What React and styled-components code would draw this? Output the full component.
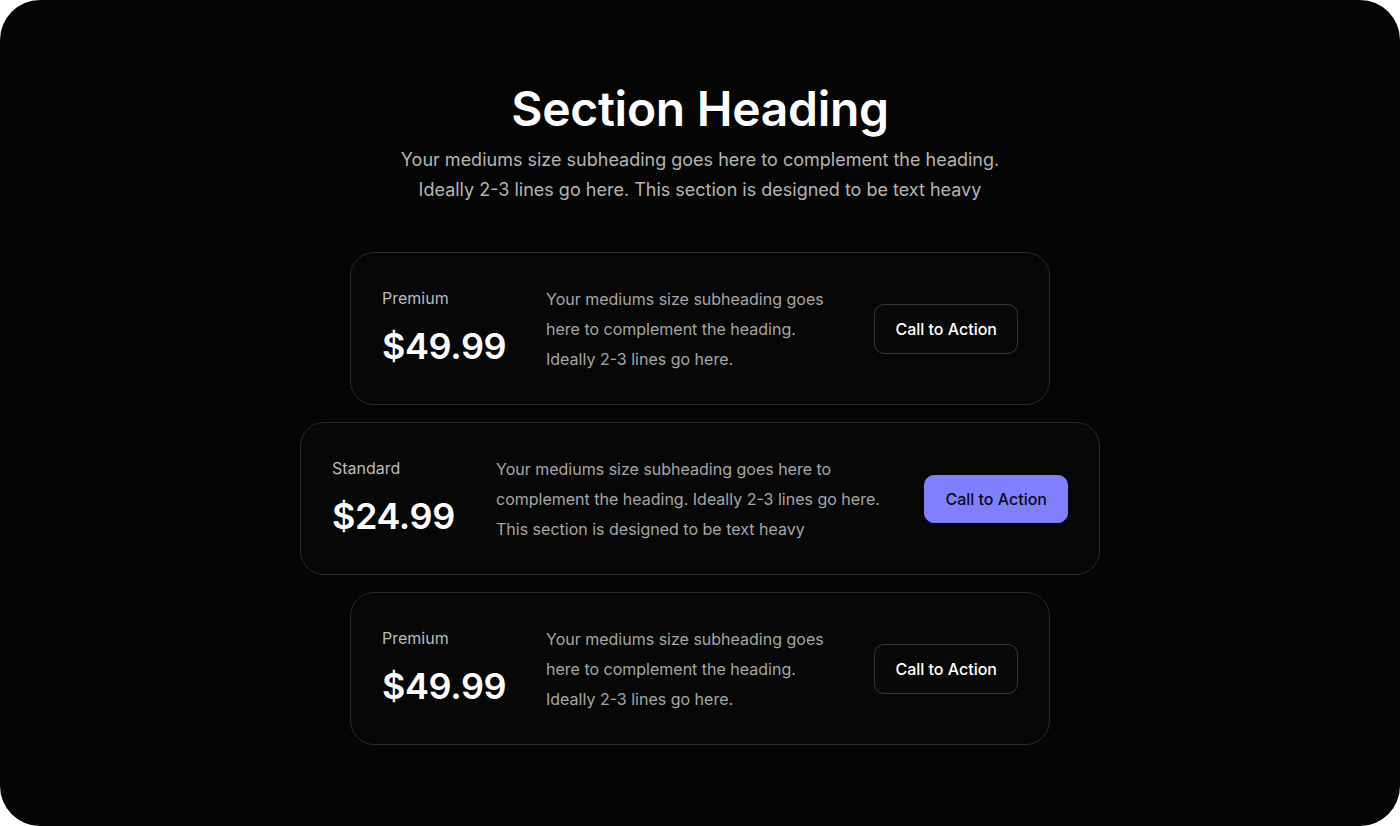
import styled, { createGlobalStyle } from "styled-components";

const GlobalStyle = createGlobalStyle`
  html, body {
    margin: 0;
    padding: 0;
    background: #ffffff;
  }
  * {
    box-sizing: border-box;
  }
`;

const Frame = styled.section`
  width: 1400px;
  height: 826px;
  background: #050505;
  border-radius: 40px;
  padding-top: 80px;
  font-family: Inter, "Noto Sans", sans-serif;
  display: flex;
  flex-direction: column;
  align-items: center;
`;

const Heading = styled.h1`
  margin: 0;
  font-size: 48px;
  line-height: 58px;
  font-weight: 600;
  color: #ffffff;
  letter-spacing: -0.3px;
`;

const Subheading = styled.p`
  margin: 7px 0 0;
  font-size: 18px;
  line-height: 30px;
  color: #b4b4b4;
  text-align: center;
`;

const CardList = styled.div`
  margin-top: 47px;
  display: flex;
  flex-direction: column;
  align-items: center;
  gap: 17px;
`;

const Card = styled.div`
  width: ${(p) => (p.$wide ? "800px" : "700px")};
  height: 153px;
  background: #070707;
  border: 1px solid #2a2a2a;
  border-radius: 24px;
  padding: 0 31px 0 31px;
  display: grid;
  grid-template-columns: 132px 1fr auto;
  column-gap: 32px;
  align-items: center;
`;

const Plan = styled.div`
  display: flex;
  flex-direction: column;
  padding-bottom: 4px;
`;

const PlanName = styled.span`
  font-size: 16px;
  line-height: 24px;
  font-weight: 400;
  color: #bcbcbc;
`;

const Price = styled.span`
  margin-top: 14px;
  font-size: 36px;
  line-height: 44px;
  font-weight: 600;
  color: #ffffff;
  letter-spacing: -0.4px;
`;

const Description = styled.p`
  margin: 0;
  font-size: 16px;
  line-height: 30px;
  color: #a6a6a6;
`;

const Button = styled.button`
  height: ${(p) => (p.$primary ? "48px" : "50px")};
  padding: 0 20px;
  border-radius: 10px;
  font-family: Inter, "Noto Sans", sans-serif;
  font-size: 16px;
  font-weight: 500;
  cursor: pointer;
  background: ${(p) => (p.$primary ? "#8080ff" : "#080808")};
  color: ${(p) => (p.$primary ? "#0b0b14" : "#ffffff")};
  border: 1px solid ${(p) => (p.$primary ? "#8080ff" : "#363636")};
`;

const plans = [
  {
    name: "Premium",
    price: "$49.99",
    text: "Your mediums size subheading goes here to complement the heading. Ideally 2-3 lines go here.",
  },
  {
    name: "Standard",
    price: "$24.99",
    text: "Your mediums size subheading goes here to complement the heading. Ideally 2-3 lines go here. This section is designed to be text heavy",
    featured: true,
  },
  {
    name: "Premium",
    price: "$49.99",
    text: "Your mediums size subheading goes here to complement the heading. Ideally 2-3 lines go here.",
  },
];

const App = () => {
  return (
    <>
      <GlobalStyle />
      <Frame>
        <Heading>Section Heading</Heading>
        <Subheading>
          Your mediums size subheading goes here to complement the heading.
          <br />
          Ideally 2-3 lines go here. This section is designed to be text heavy
        </Subheading>
        <CardList>
          {plans.map((plan, i) => (
            <Card key={i} $wide={plan.featured}>
              <Plan>
                <PlanName>{plan.name}</PlanName>
                <Price>{plan.price}</Price>
              </Plan>
              <Description>{plan.text}</Description>
              <Button $primary={plan.featured}>Call to Action</Button>
            </Card>
          ))}
        </CardList>
      </Frame>
    </>
  );
};

export default App;
